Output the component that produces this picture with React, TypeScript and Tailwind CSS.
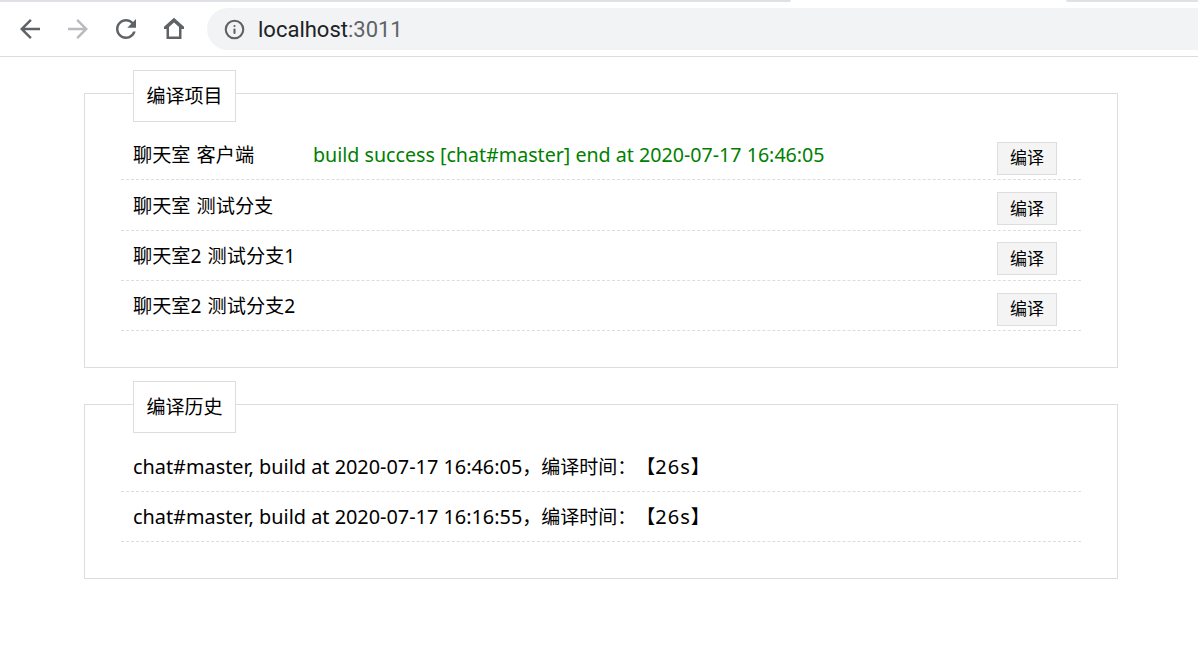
import { Info } from "lucide-react";

const font = "font-['Noto_Sans','Noto_Sans_CJK_SC',sans-serif]";

const projects = [
  { name: "聊天室 客户端", status: "build success [chat#master] end at 2020-07-17 16:46:05" },
  { name: "聊天室 测试分支" },
  { name: "聊天室2 测试分支1" },
  { name: "聊天室2 测试分支2" },
];

const history = [
  "chat#master, build at 2020-07-17 16:46:05",
  "chat#master, build at 2020-07-17 16:16:55",
];

const BrowserBar = () => (
  <div className="h-[57px] border-b border-[#dcdcdc] flex flex-col">
    <div className="h-[2px] flex">
      <div className="w-[791px] bg-[#dee1e6] rounded-br-lg" />
      <div className="flex-1" />
      <div className="w-[132px] bg-[#dee1e6] rounded-bl-lg" />
    </div>
    <div className="flex items-center pt-[6px] pl-[15px]">
      <svg className="w-[30px] h-[30px] text-[#5f6368]" viewBox="0 0 24 24" fill="currentColor">
        <path d="M20 11H7.83l5.59-5.59L12 4l-8 8 8 8 1.41-1.41L7.83 13H20v-2z" />
      </svg>
      <svg className="w-[30px] h-[30px] ml-[18px] text-[#b9bbbe]" viewBox="0 0 24 24" fill="currentColor">
        <path d="M12 4l-1.41 1.41L16.17 11H4v2h12.17l-5.58 5.59L12 20l8-8z" />
      </svg>
      <svg className="w-[30px] h-[30px] ml-[18px] text-[#5f6368]" viewBox="0 0 24 24" fill="currentColor">
        <path d="M17.65 6.35C16.2 4.9 14.21 4 12 4c-4.42 0-7.99 3.58-7.99 8s3.57 8 7.99 8c3.73 0 6.84-2.55 7.73-6h-2.08c-.82 2.33-3.04 4-5.65 4-3.31 0-6-2.69-6-6s2.69-6 6-6c1.66 0 3.14.69 4.22 1.78L13 11h7V4l-2.35 2.35z" />
      </svg>
      <svg className="w-[30px] h-[30px] ml-[18px] text-[#5f6368]" viewBox="0 0 24 24" fill="currentColor">
        <path d="M12 3L4 10.2V12h2v8h12v-8h2v-1.8L12 3zm4 15H8v-7.6l4-3.6 4 3.6V18z" />
      </svg>
      <div className="ml-[18px] flex-1 h-[42px] bg-[#f1f3f4] rounded-l-[21px] flex items-center pl-[17px]">
        <Info className="w-[21px] h-[21px] text-[#5f6368]" strokeWidth={2.4} />
        <span className="ml-[13px] text-[22px] text-[#202124] font-['Roboto',sans-serif]">
          localhost<span className="text-[#5f6368]">:3011</span>
        </span>
      </div>
    </div>
  </div>
);

const Panel = ({ title, children }: { title: string; children: React.ReactNode }) => (
  <fieldset className="border border-[#dddddd] ml-[84px] w-[1034px] px-9 pb-[36px] min-w-0">
    <legend className="ml-[12px] h-[47px]">
      <div className="px-[12.5px] h-[52px] leading-[50px] border border-[#dddddd] text-[19px] text-black bg-white">
        {title}
      </div>
    </legend>
    {children}
  </fieldset>
);

export default function App() {
  return (
    <div className={`min-h-screen bg-white ${font}`}>
      <BrowserBar />
      <div className="pt-[13px] flex flex-col gap-[13px]">
        <Panel title="编译项目">
          <ul className="pt-[13px]">
            {projects.map((p) => (
              <li
                key={p.name}
                className="h-[50.33px] pt-[2px] border-b border-dashed border-[#dddddd] flex items-center pl-3 pr-6 text-[19px] text-black"
              >
                <span className="w-[180px] text-[19.2px] [word-spacing:1px]">{p.name}</span>
                {p.status && <span className="-mt-[2px] text-[19.65px] text-[green]">{p.status}</span>}
                <button className="ml-auto mt-[5px] w-[60px] h-[33px] bg-[#f4f4f4] border border-[#dddddd] text-[17px] text-black">
                  编译
                </button>
              </li>
            ))}
          </ul>
        </Panel>
        <Panel title="编译历史">
          <ul className="pt-[14px]">
            {history.map((h) => (
              <li
                key={h}
                className="h-[50px] border-b border-dashed border-[#dddddd] flex items-center pl-3 text-[19px] text-black"
              >
                <span className="text-[19.87px]">{h}</span>
                <span className="[text-spacing-trim:space-all]">
                  {"\uFF0C编译时间\uFF1A【"}
                  <span className="text-[20px] tracking-[1px]">26s</span>】
                </span>
              </li>
            ))}
          </ul>
        </Panel>
      </div>
    </div>
  );
}
